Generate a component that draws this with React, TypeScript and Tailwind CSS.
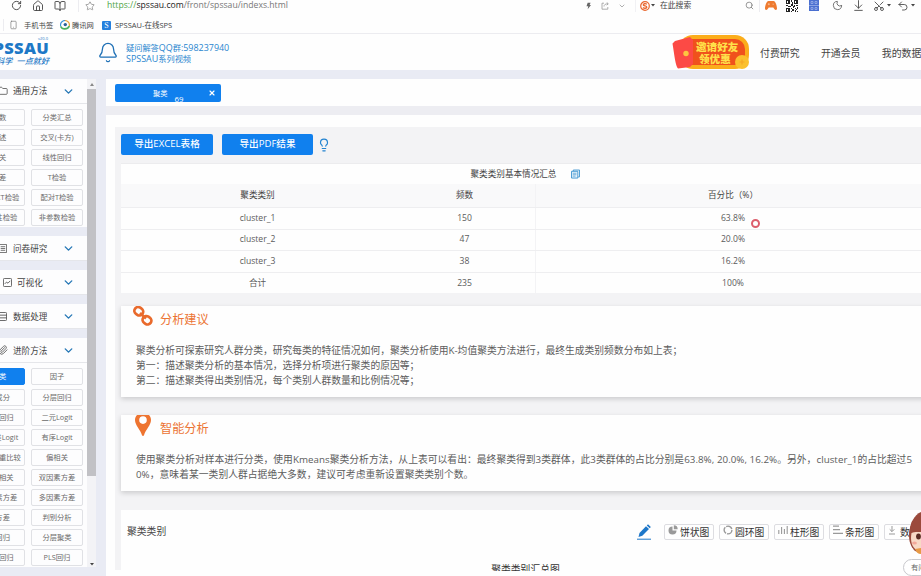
import React, { useState } from "react";
import {
  ArrowDownToLine,
  Bell,
  BookOpen,
  ChevronDown,
  Folder,
  House,
  Lightbulb,
  Moon,
  Paperclip,
  RotateCw,
  Scissors,
  Search,
  Smartphone,
  Star,
  Undo2,
  X,
} from "lucide-react";
import clsx from "clsx";

const commonMethods = [
  ["频数", "分类汇总"],
  ["描述", "交叉(卡方)"],
  ["相关", "线性回归"],
  ["方差", "T检验"],
  ["单样本T检验", "配对T检验"],
  ["正态性检验", "非参数检验"],
];

const advancedMethods = [
  ["聚类", "因子"],
  ["主成分", "分层回归"],
  ["逐步回归", "二元Logit"],
  ["多分类Logit", "有序Logit"],
  ["事后多重比较", "偏相关"],
  ["典型相关", "双因素方差"],
  ["三因素方差", "多因素方差"],
  ["协方差", "判别分析"],
  ["岭回归", "分层聚类"],
  ["稳健回归", "PLS回归"],
];

const clusters = [
  { name: "cluster_1", count: "150", percent: "63.8%" },
  { name: "cluster_2", count: "47", percent: "20.0%" },
  { name: "cluster_3", count: "38", percent: "16.2%" },
  { name: "合计", count: "235", percent: "100%" },
];

const Caret = () => (
  <svg viewBox="0 0 4 3" className="w-1 h-[3px] shrink-0">
    <path d="M0 0h4L2 2.6z" fill="#444" />
  </svg>
);

const SurveyIcon = () => (
  <svg viewBox="0 0 10 10" className="w-[9px] h-[9px]" fill="none" stroke="#555">
    <path d="M.5 .5h9v9h-9zM3 3h5M3 5h5M3 7h5" strokeWidth="0.9" />
  </svg>
);

const DataIcon = () => (
  <svg viewBox="0 0 10 10" className="w-[9px] h-[9px]" fill="none" stroke="#555">
    <rect x=".5" y=".5" width="9" height="9" rx="1" />
    <path d="M.5 3.5h9M.5 6.5h9" />
  </svg>
);

const VisualIcon = () => (
  <svg viewBox="0 0 10 10" className="w-[9px] h-[9px]" fill="none" stroke="#555">
    <rect x=".5" y=".5" width="9" height="9" rx="1" />
    <path d="M2 6.5l2-2 1.5 1.3L8 3.2" />
  </svg>
);

const QrIcon = () => (
  <svg viewBox="0 0 12 12" className="w-3 h-3" shapeRendering="crispEdges">
    <path
      fill="#222"
      d="M0 0h4v4H0zM8 0h4v4H8zM0 8h4v4H0zM5 0h1v2H5zM6 2h1v2H6zM5 4h2v2H5zM0 5h2v1H0zM3 6h2v1H3zM8 5h1v2H8zM10 5h2v1h-2zM5 8h1v1H5zM6 9h2v2H6zM9 8h1v1H9zM11 7h1v2h-1zM9 10h1v2H9zM10 9h1v1h-1zM11 11h1v1h-1zM5 11h1v1H5zM7 6h1v2H7zM2 6h1v1H2z"
    />
    <path fill="#fff" d="M1 1h1v2H1zM9 1h1v2H9zM1 9h1v2H1z" />
  </svg>
);

const BrowserBar = () => (
  <div className="h-[34px] border-b border-[#ececf0] text-[#444]">
    <div className="h-[11px] flex items-center">
      <div className="w-[580px] flex items-center shrink-0">
        <RotateCw className="w-[11px] h-[11px] ml-[11px] shrink-0" strokeWidth={2} />
        <House className="w-[12px] h-[12px] ml-[10px] shrink-0" strokeWidth={1.8} />
        <BookOpen className="w-[12px] h-[12px] ml-[10px] shrink-0" strokeWidth={1.8} />
        <span className="w-px h-3 bg-[#ececf0] ml-[12px] shrink-0" />
        <Star className="w-[10px] h-[10px] ml-[6px] shrink-0 text-[#888]" strokeWidth={1.8} />
        <span className="ml-[12px] text-[8.65px] leading-[11px] whitespace-nowrap text-[#777]">
          <span className="text-[#4fa548]">https://</span>
          <span className="text-[#222]">spssau.com</span>
          /front/spssau/indexs.html
        </span>
      </div>
      <div className="w-4 flex justify-center shrink-0">
        <svg viewBox="0 0 6 8" className="w-[5px] h-2">
          <path d="M2 0h3.500L4.300 2.700H6L2 8l.7-3.800H.6z" fill="#666" />
        </svg>
      </div>
      <div className="w-[18px] flex justify-center shrink-0">
        <svg viewBox="0 0 8 8" className="w-2 h-2" fill="none" stroke="#999" strokeWidth=".8">
          <path d="M3 1.200H1v6h5.800V5M3 4.500c0-2 1.500-2.700 4-2.700M5.700.4l1.600 1.400-1.600 1.400" />
        </svg>
      </div>
      <div className="w-[15px] flex justify-center shrink-0">
        <ChevronDown className="w-[8px] h-[8px] text-[#888]" />
      </div>
      <span className="w-px h-3 bg-[#f1f1f4] ml-[6px] shrink-0" />
      <svg viewBox="0 0 10 10" className="w-[10px] h-[10px] ml-1 shrink-0">
        <circle cx="5" cy="5" r="4.300" fill="none" stroke="#e9682f" strokeWidth="1.200" />
        <path
          d="M6.900 3.300C5.500 2.200 3.200 2.700 3.300 3.900c.1 1.200 3.600.9 3.500 2.200C6.700 7.500 4.200 7.600 3 6.500"
          fill="none"
          stroke="#e9682f"
          strokeWidth="1.300"
        />
      </svg>
      <span className="ml-px flex shrink-0">
        <Caret />
      </span>
      <span className="ml-[5px] w-[84px] shrink-0 text-[7.8px] leading-[11px]">在此搜索</span>
      <Search className="w-[9px] h-[9px] ml-px shrink-0 text-[#777]" />
      <span className="w-px h-3 bg-[#ececf0] ml-[5px] shrink-0" />
      <div className="w-[21px] flex justify-center shrink-0">
        <svg viewBox="0 0 12 9" className="w-3 h-[9px]">
          <path
            d="M3.500 0h5C10.500 0 12 5 12 7.500 12 9.300 10.300 9.300 9.300 8L8.300 6.500H3.700L2.700 8C1.700 9.300 0 9.300 0 7.500 0 5 1.500 0 3.500 0z"
            fill="#ee7b30"
          />
          <path d="M3.800 2.200v2M2.800 3.200h2M7.500 3.200h1.500" stroke="#fbd3b8" strokeWidth=".6" />
        </svg>
      </div>
      <div className="w-[22px] flex justify-center shrink-0">
        <QrIcon />
      </div>
      <div className="w-[22px] flex justify-center shrink-0">
        <svg viewBox="0 0 10 11" className="w-[10px] h-[11px]">
          <path d="M0 0h10v11H0z" fill="#4a6fd0" />
          <path
            d="M2 1.500h2v2H2zM6 1.500h2v2H6zM2 7.500h2v2H2zM6 7.500h2v2H6zM0 5.500h10"
            fill="none"
            stroke="#b4c5f0"
            strokeWidth=".6"
          />
        </svg>
      </div>
      <div className="w-[24px] flex justify-center shrink-0">
        <Moon className="w-[11px] h-[11px]" strokeWidth={1.6} />
      </div>
      <div className="w-[19px] flex justify-center shrink-0">
        <ArrowDownToLine className="w-[13px] h-[13px]" strokeWidth={1.6} />
      </div>
      <Scissors className="w-[12px] h-[12px] ml-[5px] shrink-0 -rotate-90" strokeWidth={1.7} />
      <span className="ml-[2px] flex shrink-0">
        <Caret />
      </span>
      <Undo2 className="w-[12px] h-[12px] ml-[6px] shrink-0" strokeWidth={1.7} />
      <span className="ml-[2px] flex shrink-0">
        <Caret />
      </span>
    </div>
    <div className="h-4 mt-[6px] flex items-center text-[7.3px] leading-4 whitespace-nowrap">
      <span className="w-px h-3 bg-[#ececf0] ml-[3px]" />
      <Smartphone className="w-[9px] h-[10px] ml-[5px] text-[#777]" strokeWidth={1.8} />
      <span className="ml-[6px] w-[29px]">手机书签</span>
      <svg viewBox="0 0 10 10" className="w-[10px] h-[10px] ml-[7px]">
        <path d="M5 .5A4.500 4.500 0 0 0 .8 6.500" fill="none" stroke="#3b93d8" strokeWidth="1.200" />
        <path d="M5 .5A4.500 4.500 0 0 1 9.300 6" fill="none" stroke="#e8a33a" strokeWidth="1.200" />
        <path d="M.8 6.500C2 9.700 7.500 10 9.300 6" fill="none" stroke="#4bb05e" strokeWidth="1.700" />
        <circle cx="5.300" cy="4.600" r="1.700" fill="#2a5f97" />
      </svg>
      <span className="ml-[2px] w-[22px]">腾讯网</span>
      <span className="ml-[8px] w-[9px] h-[9px] rounded-[1px] bg-[#2580dd] text-white text-[8px] leading-[9px] text-center font-['Liberation_Serif',serif]">
        S
      </span>
      <span className="ml-[4px] w-[59px] text-[7.5px]">SPSSAU-在线SPS</span>
    </div>
  </div>
);

const InviteBadge = () => (
  <svg viewBox="0 0 78 36" className="w-[78px] h-9 shrink-0">
    <rect x="7" y="1" width="70" height="34" rx="14" fill="#fbad1b" />
    <rect x="10" y="5" width="63" height="26" rx="10" fill="#f0511c" />
    <path d="M3 7l15-4 3 3v24l-3 3-12 1.500C3.500 32 2.500 22 .5 9.500z" fill="#fc4a45" />
    <circle cx="14" cy="19.500" r="2.700" fill="#fdc640" />
    <circle cx="70" cy="28" r="7" fill="#fbc02d" />
    <path d="M67.500 28h5M70 25.500v5" stroke="#f5a623" strokeWidth="1.200" />
    <text x="24" y="16.500" fontSize="10.600" fontWeight="900" fill="#ffe14a">
      邀请好友
    </text>
    <text x="27" y="28.500" fontSize="10.600" fontWeight="900" fill="#ffe14a">
      领优惠
    </text>
  </svg>
);

const Header = () => (
  <header className="h-9 flex items-center whitespace-nowrap">
    <div className="w-[49px] h-9 flex flex-col items-end justify-end shrink-0 text-[#1d78c6] pb-[4px]">
      <span className="text-[4px] leading-[4px] pr-[1px]">v20.0</span>
      <span className="text-[16.5px] leading-[13px] font-extrabold tracking-[0.3px]">SPSSAU</span>
      <span className="text-[8.1px] leading-[11px] italic font-medium mt-[1px]">
        数据科学&nbsp; 一点就好
      </span>
    </div>
    <Bell className="w-[22px] h-[23px] ml-[48px] shrink-0 text-[#1d6fb5]" strokeWidth={1.4} />
    <div className="ml-[7px] mt-[2px] w-[546px] shrink-0 text-[8.2px] leading-[11.5px] text-[#2a86cf]">
      <div>
        疑问解答<span className="text-[8.95px]">QQ</span>群<span className="text-[8.95px]">:598237940</span>
      </div>
      <div>
        <span className="text-[8.95px]">SPSSAU</span>系列视频
      </div>
    </div>
    <InviteBadge />
    <nav className="flex gap-[21.4px] ml-[10px] mt-[2px] text-[9.9px] text-[#444]">
      <span>付费研究</span>
      <span>开通会员</span>
      <span>我的数据</span>
    </nav>
  </header>
);

type GroupProps = {
  title: string;
  icon: React.ReactNode;
  narrow?: boolean;
  methods?: string[][];
  active?: string;
  onSelect?: (name: string) => void;
};

const MethodGroup = ({ title, icon, narrow, methods, active, onSelect }: GroupProps) => (
  <section className="bg-[#fdfdfe]">
    <div className="h-[25px] flex items-center border-b border-[#e5e6ea] text-[8.6px] text-[#444] whitespace-nowrap">
      <span className={clsx("flex text-[#555]", narrow ? "ml-[30px] w-[14px]" : "ml-[25px] w-[15px]")}>
        {icon}
      </span>
      <span className={clsx("mt-px", narrow ? "w-[45px]" : "w-[49px]")}>{title}</span>
      <ChevronDown className="w-[13px] h-[13px] text-[#2577b5]" strokeWidth={2.6} />
    </div>
    {methods && (
      <div className="grid grid-cols-[52px_52px] gap-x-[6px] gap-y-[3.1px] pt-[5px] pb-px">
        {methods.flat().map((name) => (
          <button
            key={name}
            onClick={() => onSelect?.(name)}
            className={clsx(
              "h-[17px] rounded-[2px] border text-[7.3px] leading-[15px] text-center whitespace-nowrap",
              name === active
                ? "bg-[#1080ee] border-[#1080ee] text-white"
                : "bg-[#fdfdfe] border-[#e0e1e5] text-[#6a6a6a]"
            )}
          >
            {name}
          </button>
        ))}
      </div>
    )}
  </section>
);

const Sidebar = () => {
  const [active, setActive] = useState("聚类");

  return (
    <aside className="flex w-[106px] shrink-0 overflow-hidden h-[488px]">
      <div className="w-[114px] -ml-[27px] shrink-0 flex flex-col gap-[9px]">
        <MethodGroup
          title="通用方法"
          icon={<Folder className="w-[10px] h-[10px]" />}
          methods={commonMethods}
          onSelect={setActive}
        />
        <MethodGroup title="问卷研究" icon={<SurveyIcon />} />
        <MethodGroup title="可视化" icon={<VisualIcon />} narrow />
        <MethodGroup title="数据处理" icon={<DataIcon />} />
        <MethodGroup
          title="进阶方法"
          icon={<Paperclip className="w-[10px] h-[10px]" />}
          methods={advancedMethods}
          active={active}
          onSelect={setActive}
        />
      </div>
      <div className="w-[9px] shrink-0 bg-[#f3f3f6] flex flex-col items-center">
        <svg viewBox="0 0 4 3" className="w-1 h-[3px] mt-[4px]">
          <path d="M0 3h4L2 0z" fill="#888" />
        </svg>
        <div className="w-[9px] h-[387px] bg-[#c1c1c5] mt-[3px]" />
        <span className="mt-[87px]">
          <Caret />
        </span>
      </div>
    </aside>
  );
};

const ClusterTable = () => (
  <div className="bg-[#fefefe] text-[8.6px] text-[#5c5c5c]">
    <div className="h-[21px] flex items-center justify-center border-t border-[#ececee] text-[#444]">
      <span>聚类类别基本情况汇总</span>
      <svg viewBox="0 0 10 10" className="w-[9px] h-[10px] ml-[15px]" fill="none" stroke="#3a93cf">
        <path d="M2.500 2V.6h7v7.600H8" />
        <path d="M.6 2h7v7.500h-7z" fill="#e6f2fa" />
        <path d="M2 4.200h4M2 5.800h4M2 7.400h3" strokeWidth=".7" />
      </svg>
    </div>
    <div className="grid grid-cols-[273px_141px_395px] h-[23px] items-center text-center bg-[#f9f9fa] text-[#444]">
      <span>聚类类别</span>
      <span>频数</span>
      <span className="border-l border-[#f3f3f5] h-full flex items-center justify-center">百分比（%）</span>
    </div>
    {clusters.map((row) => (
      <div
        key={row.name}
        className="grid grid-cols-[273px_141px_395px] h-[21.6px] items-center text-center border-t border-[#eeeef0]"
      >
        <span>{row.name}</span>
        <span>{row.count}</span>
        <span className="border-l border-[#f3f3f5] h-full flex items-center justify-center">{row.percent}</span>
      </div>
    ))}
  </div>
);

const ChartButton = ({ label, children }: { label: string; children: React.ReactNode }) => (
  <button className="w-[50px] h-4 shrink-0 flex items-center border border-[#dddde1] rounded-[2px] pl-[3px] text-[9.8px] leading-[14px] text-[#333] whitespace-nowrap">
    <svg viewBox="0 0 10 10" className="w-[10px] h-[10px] mr-[2px] mb-[5px] shrink-0" fill="none" stroke="#999">
      {children}
    </svg>
    <span className="mt-px">{label}</span>
  </button>
);

const ChartPanel = () => (
  <div className="h-[61px] mt-[19px] bg-[#fefefe] overflow-hidden">
    <div className="h-[44px] flex items-center pl-[6px]">
      <span className="w-[511px] shrink-0 text-[9.8px] text-[#444]">聚类类别</span>
      <svg viewBox="0 0 14 16" className="w-[14px] h-4 shrink-0 mr-[13px] -ml-px">
        <path d="M1.500 13l1-4L9 2.200l3 2.800-6.700 6.700z" fill="#1d77c9" />
        <path d="M9.800 1.500L11 .3l2.800 2.600-1.100 1.300z" fill="#1d77c9" />
        <path d="M0 15.200h14" stroke="#1d77c9" />
      </svg>
      <div className="flex gap-[5px]">
        <ChartButton label="饼状图">
          <path d="M4.500 1.500a4 4 0 1 0 4 4h-4z" fill="#999" stroke="none" />
          <path d="M5.800.3v3.900h3.900A3.900 3.900 0 0 0 5.800.3z" fill="#999" stroke="none" />
        </ChartButton>
        <ChartButton label="圆环图">
          <circle cx="5" cy="5" r="3.900" strokeWidth="1.400" strokeDasharray="7 1" />
        </ChartButton>
        <ChartButton label="柱形图">
          <path d="M.8 5v4M3.600 2v7M6.400 4v5M9.200 1v8" strokeWidth="1.100" />
        </ChartButton>
        <ChartButton label="条形图">
          <path d="M0 1.200h6M0 4.700h7M0 8.300h10" strokeWidth="1.200" />
        </ChartButton>
        <ChartButton label="数据">
          <path d="M4 1v5.500M1.700 4.300L4 6.600l2.300-2.300M1 9h6" />
        </ChartButton>
      </div>
    </div>
    <div className="mt-[9px] text-center text-[9.8px] leading-[14px] text-[#333]">聚类类别汇总图</div>
  </div>
);

const Assistant = () => (
  <div className="absolute right-0 top-[512px] w-[18px] h-16">
    <svg viewBox="0 0 12 42" className="absolute right-0 top-0 w-3 h-[42px]">
      <path d="M12 0C5 3 1 11 0 22c-.3 9 3 14 6 17l6 2z" fill="#9b4a3c" />
      <path d="M12 20C8 20 4 19 2.500 21c-1.500 8 .5 14 5 17l4.500 2z" fill="#f8d9c6" />
      <path d="M0 21c5-1 9-1 12-3V9H3z" fill="#9b4a3c" />
      <ellipse cx="9.500" cy="24.500" rx="2.400" ry="3" fill="#5b2d25" />
      <ellipse cx="5.500" cy="31" rx="2.400" ry="1.600" fill="#f3a99b" />
      <path d="M6 37l6-1v6c-3 0-5-2-6-5z" fill="#e79a45" />
    </svg>
    <div className="absolute left-0 top-[47px] w-[60px] h-[17px] border border-[#c9c9cd] rounded-full bg-white pl-[7px] text-[7.3px] leading-[15px] text-[#666] whitespace-nowrap">
      有问题
    </div>
  </div>
);

const App = () => {
  return (
    <main className="relative w-[921px] h-[576px] overflow-hidden bg-[#fefefe] font-['Open_Sans','Noto_Sans_CJK_SC',sans-serif]">
      <BrowserBar />
      <Header />
      <div className="flex h-[506px] pt-[9px] bg-[#e9ebf4]">
        <Sidebar />
        <div className="w-[815px] shrink-0 flex flex-col">
          <div className="h-[27px] bg-[#fefefe] pl-[9px] pt-[5px] shrink-0">
            <div className="w-[106px] h-[18px] rounded-[2px] bg-[#1080ee] text-white text-[7.3px] flex items-center">
              <span className="ml-[38px] leading-[18px]">聚类</span>
              <span className="ml-[7px] text-[7.8px] leading-[10px] mt-[11px]">69</span>
              <X className="w-[8px] h-[8px] ml-[24px]" strokeWidth={3.5} />
            </div>
          </div>
          <div className="h-[9px] shrink-0 bg-[#ededf2]" />
          <div className="pt-[12px] pl-[9px] bg-[#fefefe] h-[461px] shrink-0">
            <div className="w-[824px] h-[443px] bg-[#f3f3f5] pl-[6px] pt-[7px]">
              <div className="w-[809px]">
                <div className="flex items-center h-[21px] text-[9.6px] font-medium text-white">
                  <button className="w-[92px] h-[21px] rounded-[2px] bg-[#1080ee]">导出EXCEL表格</button>
                  <button className="w-[91px] h-[21px] rounded-[2px] bg-[#1080ee] ml-[9px]">导出PDF结果</button>
                  <Lightbulb className="w-[14px] h-[14px] ml-[4px] text-[#2383d0]" strokeWidth={2} />
                </div>
                <div className="mt-[8px] h-[131px]">
                  <ClusterTable />
                </div>
                {/* suggestion */}
                <section className="mt-[12px] h-[91px] bg-[#fefefe] shadow-[0_2px_5px_rgba(0,0,0,0.17)] text-[#5c5c5c]">
                  <div className="flex h-[27px]">
                    <svg
                      viewBox="0 0 22 20"
                      className="w-[22px] h-5 ml-[11px]"
                      fill="none"
                      stroke="#e96a2c"
                      strokeWidth="2.700"
                    >
                      <rect x="2.300" y="1.500" width="9" height="7.500" rx="3.700" transform="rotate(35 6.800 5.200)" />
                      <rect x="10.500" y="10.500" width="9" height="7.500" rx="3.700" transform="rotate(35 15 14.200)" />
                      <path d="M8 7l6 5.500" strokeWidth="2.500" />
                    </svg>
                    <h2 className="ml-[6px] text-[12.2px] leading-[27px] text-[#ec7433]">分析建议</h2>
                  </div>
                  <div className="pl-[15px] mt-[10px] text-[9.78px] leading-[15.1px] whitespace-nowrap">
                    <p>聚类分析可探索研究人群分类，研究每类的特征情况如何，聚类分析使用K-均值聚类方法进行，最终生成类别频数分布如上表；</p>
                    <p>第一：描述聚类分析的基本情况，选择分析项进行聚类的原因等；</p>
                    <p>第二：描述聚类得出类别情况，每个类别人群数量和比例情况等；</p>
                  </div>
                </section>
                {/* smart analysis */}
                <section className="mt-[18px] h-[76px] bg-[#fefefe] shadow-[0_2px_5px_rgba(0,0,0,0.17)] text-[#5c5c5c]">
                  <div className="flex h-[27px]">
                    <svg viewBox="0 0 16 22" className="w-4 h-[22px] ml-[14px]">
                      <path
                        fillRule="evenodd"
                        fill="#ee7430"
                        d="M2 0h12c1.500 1.500 2 3.200 2 5 0 5-5.500 10-7 15.200-.4 1-1.600 1-2 0C5.500 15 0 10 0 5c0-1.800.5-3.500 2-5zM8 1.300a3.800 3.800 0 1 0 0 7.600 3.800 3.800 0 0 0 0-7.600z"
                      />
                    </svg>
                    <h2 className="ml-[9px] text-[12.2px] leading-[27px] text-[#ec7433]">智能分析</h2>
                  </div>
                  <div className="pl-[15px] mt-[10px] text-[9.78px] leading-[15.1px] tracking-[0.04px] whitespace-nowrap">
                    <p>使用聚类分析对样本进行分类，使用Kmeans聚类分析方法，从上表可以看出：最终聚类得到3类群体，此3类群体的占比分别是63.8%, 20.0%, 16.2%。另外，cluster_1的占比超过5</p>
                    <p>0%，意味着某一类别人群占据绝大多数，建议可考虑重新设置聚类类别个数。</p>
                  </div>
                </section>
                <ChartPanel />
              </div>
            </div>
          </div>
        </div>
      </div>
      {/* pointer */}
      <span className="absolute left-[751px] top-[219px] w-[9px] h-[9px] rounded-full border-2 border-[#dc5e6c]" />
      <Assistant />
    </main>
  );
};

export default App;
